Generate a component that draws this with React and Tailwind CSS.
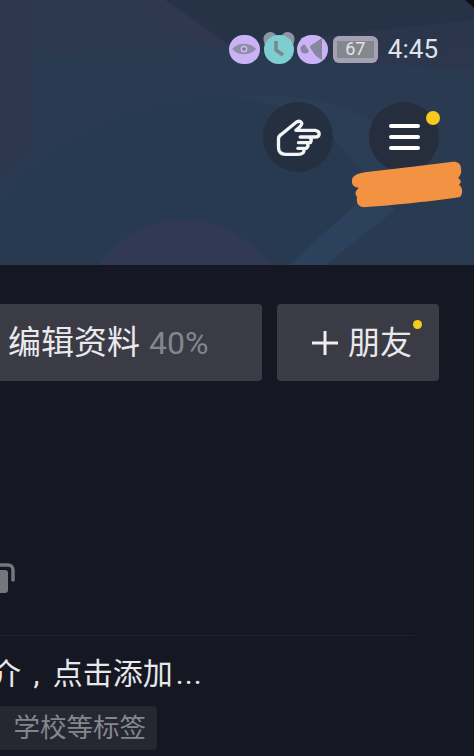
export default function App() {
  return (
    <div className="w-[474px] h-[756px] overflow-hidden bg-[#151823] flex flex-col font-['Roboto','Noto_Sans_CJK_SC',sans-serif]">
      <header className="relative h-[265px] shrink-0 bg-[#2a3c52] overflow-hidden">
        <svg className="absolute inset-0" width="474" height="265" viewBox="0 0 474 265" aria-hidden="true">
          <rect width="474" height="265" fill="#2a3b51" />
          <path d="M0 0H32V150L0 180Z" fill="#2f384f" opacity=".7" />
          <path d="M32 0H165L235 50 34 55Z" fill="#2c394f" />
          <path d="M165 0H474V48L340 60 232 48Z" fill="#263347" />
          <path d="M128 0H165L232 46 200 42Z" fill="#323750" opacity=".7" />
          <path d="M230 46L474 20V70L310 60Z" fill="#2d374e" opacity=".8" />
          <path d="M0 200C60 125 150 97 220 97 300 97 345 130 365 165L330 265H0Z" fill="#273a50" />
          <path d="M240 97C310 90 390 112 420 165L392 192 355 165C335 130 290 105 240 97Z" fill="#2b3e56" />
          <path d="M98 265C125 232 155 220 185 220 220 220 250 238 272 265Z" fill="#323954" />
          <path d="M305 250L372 190 395 210 325 265H290Z" fill="#2c415c" />
          <path d="M465 0H474V8Z" fill="#0d0f15" />
        </svg>

        <div className="relative flex flex-col items-end pt-[33px] pr-[36px]">
          <div className="flex items-center h-[32px]">
            <div className="w-[31px] h-[29px] rounded-full bg-[#c9b2f6] flex items-center justify-center">
              <svg width="26" height="16" viewBox="0 0 26 16">
                <path d="M1 8C7 1 19 1 25 8 19 15 7 15 1 8Z" fill="#8f8fa6" />
                <circle cx="13" cy="8" r="3.5" fill="#c9b2f6" />
                <circle cx="13" cy="8" r="1.8" fill="#7c7c92" />
              </svg>
            </div>
            <div className="relative w-[30px] h-[29px] ml-[4px]">
              <span className="absolute -top-[3px] -left-[1px] w-[14px] h-[11px] rounded-t-full bg-[#8a97a2] -rotate-[15deg]" />
              <span className="absolute -top-[3px] -right-[1px] w-[14px] h-[11px] rounded-t-full bg-[#8a97a2] rotate-[15deg]" />
              <div className="relative w-full h-full rounded-full bg-[#7ecdd0] flex items-center justify-center">
                <svg width="18" height="20" viewBox="0 0 18 20">
                  <path d="M6 2V11L13 16" fill="none" stroke="#77868f" strokeWidth="3.5" />
                </svg>
              </div>
            </div>
            <div className="w-[31px] h-[29px] ml-[3px] rounded-full bg-[#c9b2f6] flex items-center justify-center">
              <svg width="26" height="24" viewBox="0 0 26 24">
                <path d="M11 9L23 1V23L11 15Z" fill="#87879f" />
                <circle cx="6" cy="12" r="4.5" fill="#87879f" />
                <path d="M3 1L17 22" stroke="#c9b2f6" strokeWidth="3" />
              </svg>
            </div>
            <div className="ml-[5px] w-[45px] h-[27px] rounded-[6px] bg-[#a6a1b2] flex items-center justify-center">
              <div className="w-[37px] h-[17px] bg-[#85878f] flex items-center justify-center text-[18px] leading-none text-[#e3e3e6]">67</div>
            </div>
            <span className="ml-[10px] text-[26px] leading-none text-[#dfe3e9]">4:45</span>
          </div>

          <div className="flex items-center gap-[36px] mt-[37px] -mr-[1px]">
            <button className="w-[70px] h-[70px] rounded-full bg-[#242f40] flex items-center justify-center">
              <svg width="47" height="40" viewBox="230 285 140 120">
                <path
                  d="M292 325H350Q362 327 362 335 362 345 350 345H305M332 345Q342 352 336 362H300M326 362Q332 372 324 379H298M316 379Q320 397 298 397H262Q240 397 240 376V350Q240 342 250 336L294 300Q306 294 310 304 310 312 292 325"
                  fill="none"
                  stroke="#f2f4f6"
                  strokeWidth="10"
                  strokeLinejoin="round"
                  strokeLinecap="round"
                />
              </svg>
            </button>
            <button className="relative w-[70px] h-[70px] rounded-full bg-[#262e3d] flex flex-col items-center justify-center gap-[7px]">
              <span className="w-[31px] h-[4px] rounded-[2px] bg-white" />
              <span className="w-[31px] h-[4px] rounded-[2px] bg-white" />
              <span className="w-[31px] h-[4px] rounded-[2px] bg-white" />
              <span className="absolute top-[9px] right-[-1px] w-[14px] h-[14px] rounded-full bg-[#f7cb1d]" />
            </button>
          </div>
        </div>

        <svg className="absolute left-[345px] top-[158px]" width="120" height="52" viewBox="0 0 120 52" aria-hidden="true">
          <path
            d="M7 24C6 18 12 15 22 14L65 9 106 4C112 3 116 5 116 11 117 15 115 18 113 20 117 22 116 25 114 27 118 29 118 36 115 39 90 43 50 47 22 49 14 50 11 46 12 39 9 35 11 32 14 30 9 29 7 27 7 24Z"
            fill="#f39242"
          />
        </svg>
      </header>

      <main className="flex-1 flex flex-col">
        <div className="flex h-[77px] mt-[39px] pr-[35px] gap-[15px]">
          <button className="flex-1 flex items-center pl-[8px] rounded-r-[4px] bg-[#3a3b45] text-[33px] leading-none text-[#e9e9ec] whitespace-nowrap">
            编辑资料<span className="ml-[9px] text-[32px] text-[#85868d]">40%</span>
          </button>
          <button className="relative w-[162px] flex items-center pl-[35px] rounded-[4px] bg-[#3a3b45] text-[32px] leading-none text-[#e9e9ec]">
            <svg className="mr-[10px]" width="26" height="26" viewBox="0 0 26 26">
              <path d="M13 1V25M0 13H26" stroke="#eeeef0" strokeWidth="3" />
            </svg>
            朋友
            <span className="absolute top-[16px] right-[17px] w-[9px] h-[9px] rounded-full bg-[#f7cb1d]" />
          </button>
        </div>

        <div className="h-[31px] mt-[181px] w-[15px] overflow-hidden">
          <svg width="15" height="31" viewBox="0 0 15 31">
            <path d="M0 3H8C11 3 13 5 13 8V18" fill="none" stroke="#76777d" strokeWidth="3.5" strokeLinecap="round" />
            <rect x="-12" y="8" width="20" height="23" rx="3" fill="#76777d" />
          </svg>
        </div>

        <div className="mt-[42px] w-[415px] border-t border-[#1f222d]" />

        <p className="mt-[21px] -ml-[9px] text-[30px] leading-[34px] text-[#e8e8ea] whitespace-nowrap">介 <span className="ml-[5px] mr-[6px]">,</span> 点击添加<span className="ml-[3px] tracking-[1px]">...</span></p>

        <div className="mt-[15px] w-[157px] h-[44px] rounded-r-[4px] bg-[#252731] flex items-center justify-end pr-[11px] text-[26.5px] leading-none text-[#85868d] whitespace-nowrap">
          学校等标签
        </div>
      </main>
    </div>
  );
}
